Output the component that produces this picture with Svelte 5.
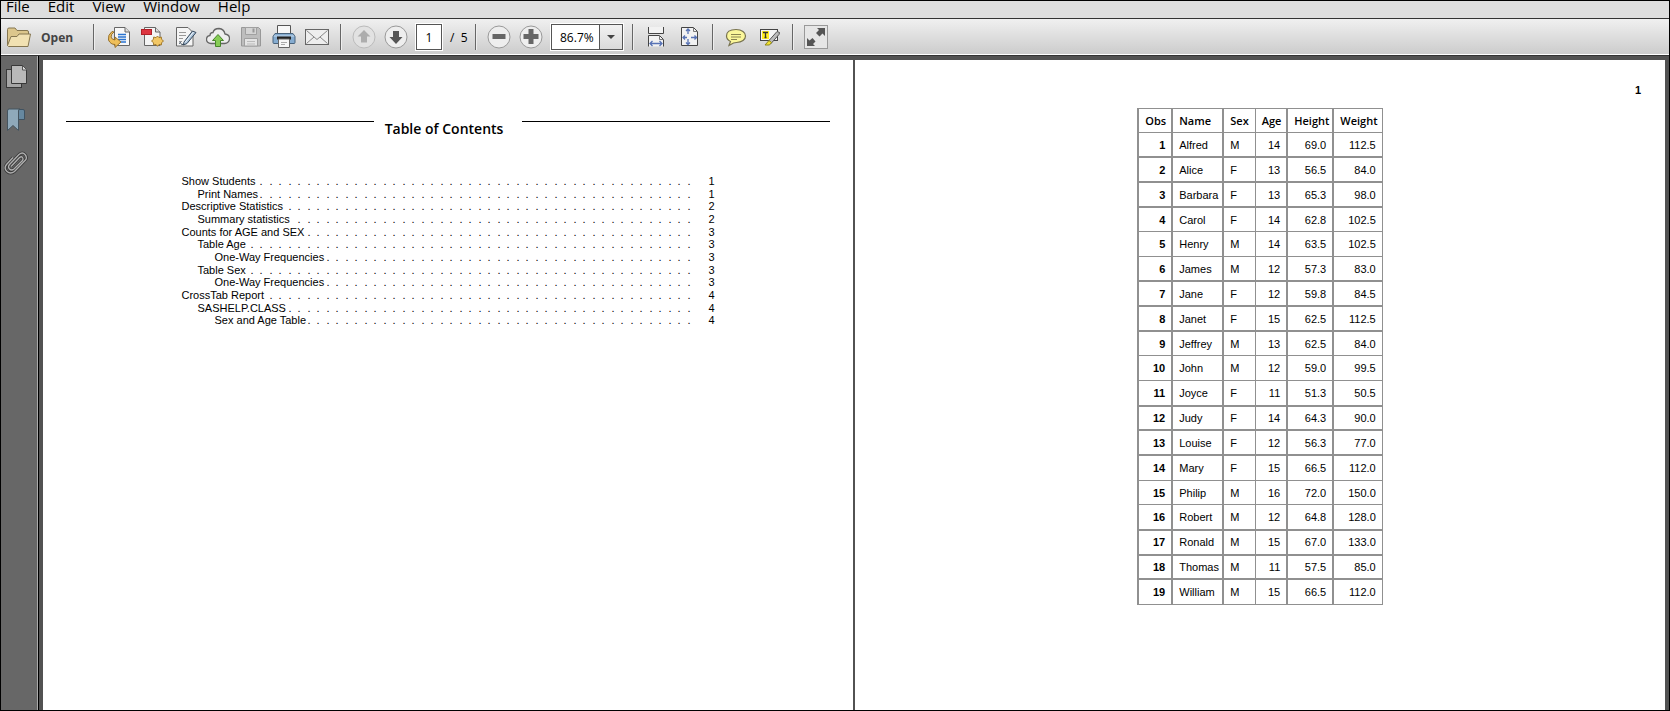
<script>
let page = '1'
let zoom = '86.7%'

const menus = ['File', 'Edit', 'View', 'Window', 'Help']

// dots = how many leader dots fit after the title
const toc = [
  { title: 'Show Students', level: 0, dots: 46, page: 1 },
  { title: 'Print Names', level: 1, dots: 46, page: 1 },
  { title: 'Descriptive Statistics', level: 0, dots: 43, page: 2 },
  { title: 'Summary statistics', level: 1, dots: 42, page: 2 },
  { title: 'Counts for AGE and SEX', level: 0, dots: 41, page: 3 },
  { title: 'Table Age', level: 1, dots: 47, page: 3 },
  { title: 'One-Way Frequencies', level: 2, dots: 39, page: 3 },
  { title: 'Table Sex', level: 1, dots: 47, page: 3 },
  { title: 'One-Way Frequencies', level: 2, dots: 39, page: 3 },
  { title: 'CrossTab Report', level: 0, dots: 45, page: 4 },
  { title: 'SASHELP.CLASS', level: 1, dots: 43, page: 4 },
  { title: 'Sex and Age Table', level: 2, dots: 41, page: 4 }
]

const students = [
  ['Alfred', 'M', 14, 69.0, 112.5],
  ['Alice', 'F', 13, 56.5, 84.0],
  ['Barbara', 'F', 13, 65.3, 98.0],
  ['Carol', 'F', 14, 62.8, 102.5],
  ['Henry', 'M', 14, 63.5, 102.5],
  ['James', 'M', 12, 57.3, 83.0],
  ['Jane', 'F', 12, 59.8, 84.5],
  ['Janet', 'F', 15, 62.5, 112.5],
  ['Jeffrey', 'M', 13, 62.5, 84.0],
  ['John', 'M', 12, 59.0, 99.5],
  ['Joyce', 'F', 11, 51.3, 50.5],
  ['Judy', 'F', 14, 64.3, 90.0],
  ['Louise', 'F', 12, 56.3, 77.0],
  ['Mary', 'F', 15, 66.5, 112.0],
  ['Philip', 'M', 16, 72.0, 150.0],
  ['Robert', 'M', 12, 64.8, 128.0],
  ['Ronald', 'M', 15, 67.0, 133.0],
  ['Thomas', 'M', 11, 57.5, 85.0],
  ['William', 'M', 15, 66.5, 112.0]
]
</script>

<div class="app">
  <nav class="menubar">
    {#each menus as m}
      <button>{m}</button>
    {/each}
  </nav>

  <div class="toolbar">
    <button class="open">
      <svg width="26" height="24" viewBox="0 0 26 24">
        <path d="M1.5 20.5V4.5Q1.5 3 3 3h6l2 2.5h10q1.5 0 1.5 1.5v3" fill="#dcc68c" stroke="#857650" />
        <path d="M1.5 20.5L5 11.5h6l2-2.5h11.5L22 21.5H2.5z" fill="#f1e1b2" stroke="#857650" stroke-linejoin="round" />
      </svg>
      <span>Open</span>
    </button>
    <i class="sep"></i>

    <div class="group files">
      <button aria-label="Convert">
        <svg width="24" height="24" viewBox="0 0 24 24">
          <path d="M7.5 2.5H18l4.500 4.500v13.500h-15z" fill="#f8f8f8" stroke="#666" />
          <path d="M18 2.500V7h4.500" fill="#ddd" stroke="#666" />
          <path d="M11 9.500h8M11 12h8M11 14.500h8M13 17h6" stroke="#2a73d0" stroke-width="1.5" />
          <path d="M5 6.500Q.5 10 1.500 15q2 4.500 6.500 4.500v3l6-5.500-6-5v3Q4.500 14.500 4 12q0-3 3-5z" fill="#efbf5a" stroke="#96702c" />
        </svg>
      </button>
      <button aria-label="Create PDF">
        <svg width="24" height="24" viewBox="0 0 24 24">
          <path d="M4.500 2.500h11L20 7v13.500H4.500z" fill="#f4f4f4" stroke="#666" />
          <path d="M15.500 2.500V7H20" fill="#ddd" stroke="#666" />
          <rect x="1.5" y="4.5" width="10" height="5" fill="#dd3540" stroke="#b02028" />
          <path d="M17.500 11l1.500 1.700 2.300-.7.200 2.300 2 1.700-2 1.700-.2 2.300-2.300-.6-1.500 1.900-1.500-1.900-2.300.6-.2-2.300-2-1.700 2-1.700.2-2.300 2.300.7z" fill="#f2c765" stroke="#a37a2b" />
        </svg>
      </button>
      <button aria-label="Sign">
        <svg width="24" height="24" viewBox="0 0 24 24">
          <path d="M3.500 2.500H15l5 5v13.500H3.500z" fill="#f5f5f5" stroke="#666" />
          <path d="M6 7.500h7M6 10.500h7M6 13.500h4M6 16.500h3" stroke="#999" />
          <path d="M11 17L19.500 6l3.500 1.500L14 18.500l-3.500 1.500z" fill="#a9c2d9" stroke="#37495c" />
          <path d="M12 17.500L20.500 7" stroke="#eef5fb" />
          <path d="M6 18.500q2-2 2 0t3 .5" fill="none" stroke="#345" />
        </svg>
      </button>
      <button aria-label="Upload">
        <svg width="24" height="24" viewBox="0 0 24 24">
          <path d="M5 18.500Q.5 18 .5 14.500.5 11 4 10.500 4 7.500 7 7.500q1-4 6-4 5 .5 6 5.500 4.500.5 4.500 4.500 0 4.500-5 5z" fill="#eee" stroke="#666" stroke-width="1.3" />
          <path d="M12 9.500l5.500 6h-3v6h-5v-6h-3z" fill="#86cc55" stroke="#46852a" />
        </svg>
      </button>
      <button aria-label="Save" disabled>
        <svg width="24" height="24" viewBox="0 0 24 24">
          <path d="M2.500 2.500h17l2 2v16.500h-19z" fill="#bdbdbd" stroke="#989898" />
          <path d="M6.500 2.500h11v7h-11z" fill="#d4d4d4" stroke="#a0a0a0" />
          <path d="M13.500 3.500h2v4h-2z" fill="#999" />
          <path d="M5.500 13.500h13V21h-13z" fill="#e4e4e4" stroke="#a0a0a0" />
          <path d="M8 16.500h8M8 19h8" stroke="#bbb" />
        </svg>
      </button>
      <button aria-label="Print">
        <svg width="24" height="24" viewBox="0 0 24 24">
          <path d="M5.500 10V.5h13V10" fill="#f7f7f7" stroke="#555" />
          <path d="M3 8.500h18l2 3v6q0 1-1 1H2q-1 0-1-1v-6z" fill="#86acd0" stroke="#49637c" />
          <path d="M2 11h20" stroke="#c7dcef" />
          <path d="M5 13h14" stroke="#222" stroke-width="3" />
          <path d="M6.500 14h11v8.500h-11z" fill="#f7f7f7" stroke="#666" />
          <path d="M9 17.500h6M9 19.500h4" stroke="#aaa" />
        </svg>
      </button>
      <button aria-label="Email">
        <svg width="24" height="24" viewBox="0 0 24 24">
          <rect x=".5" y="4.5" width="23" height="15" fill="#eee" stroke="#666" />
          <path d="M1.500 5.500L12 14.500l10.500-9M1.500 18.500L9 12M22.500 18.500L15 12" fill="none" stroke="#888" />
        </svg>
      </button>
    </div>
    <i class="sep"></i>

    <div class="group">
      <button aria-label="Previous page" disabled>
        <svg width="24" height="24" viewBox="0 0 24 24">
          <circle cx="12" cy="12" r="11" fill="#e2e2e2" stroke="#bbb" />
          <path d="M12 5l6.500 6.500H15v6H9v-6H5.500z" fill="#adadad" />
        </svg>
      </button>
      <button aria-label="Next page">
        <svg width="24" height="24" viewBox="0 0 24 24">
          <circle cx="12" cy="12" r="11" fill="#eee" stroke="#999" />
          <path d="M9 6h6v6h3.500L12 19l-6.500-7H9z" fill="#555" />
        </svg>
      </button>
      <input class="pageno" aria-label="Page" bind:value={page} />
      <span class="total">/&nbsp; 5</span>
    </div>
    <i class="sep"></i>

    <div class="group">
      <button aria-label="Zoom out">
        <svg width="24" height="24" viewBox="0 0 24 24">
          <circle cx="12" cy="12" r="11" fill="#eee" stroke="#999" />
          <path d="M5.500 9h13v5h-13z" fill="#666" />
        </svg>
      </button>
      <button aria-label="Zoom in">
        <svg width="24" height="24" viewBox="0 0 24 24">
          <circle cx="12" cy="12" r="11" fill="#eee" stroke="#999" />
          <path d="M9.500 4h5v5h5v5h-5v5h-5v-5h-5V9h5z" fill="#666" />
        </svg>
      </button>
      <div class="zoom">
        <select aria-label="Zoom" bind:value={zoom}>
          <option>86.7%</option>
        </select>
        <svg width="22" height="24" viewBox="0 0 22 24">
          <path d="M7 10h8l-4 4z" fill="#444" />
        </svg>
      </div>
    </div>
    <i class="sep"></i>

    <div class="group wide">
      <button aria-label="Fit width">
        <svg width="24" height="24" viewBox="0 0 24 24">
          <path d="M4.500 2v6.500h15V2" fill="#f2f2f2" stroke="#444" />
          <path d="M4.500 21.500v-11h11l4 4v7" fill="#f2f2f2" stroke="#444" />
          <path d="M15.500 10.500v4h4" fill="none" stroke="#777" />
          <path d="M6 18.500h12M8.500 16L6 18.500 8.500 21M15.500 16l2.500 2.500-2.500 2.500" fill="none" stroke="#5873b5" stroke-width="1.3" />
        </svg>
      </button>
      <button aria-label="Fit page">
        <svg width="24" height="24" viewBox="0 0 24 24">
          <path d="M3.500 2.500h12l4 4v14h-16z" fill="#f2f2f2" stroke="#444" />
          <path d="M15.500 2.500v4h4" fill="none" stroke="#777" />
          <path d="M10 4v5M10 14v6M5 12.500h4M13 12.500h6M8 6l2-2 2 2M8 17.500l2 2 2-2M7 10.500l-2 2 2 2M16.500 10.500l2 2-2 2" fill="none" stroke="#5873b5" stroke-width="1.3" />
        </svg>
      </button>
    </div>
    <i class="sep"></i>

    <div class="group wide">
      <button aria-label="Comment">
        <svg width="24" height="24" viewBox="0 0 24 24">
          <path d="M12 4.500c6 0 9.500 3 9.500 6.500s-3.500 6.500-9 6.500l-3 .5L5 20.500l1.500-4Q2.500 14.500 2.500 11 2.500 4.500 12 4.500z" fill="#fbf79a" stroke="#77724f" stroke-width="1.2" />
          <path d="M7 9.500h10M7 12h10M7 14.500h6" stroke="#8a8550" />
        </svg>
      </button>
      <button aria-label="Highlight">
        <svg width="24" height="24" viewBox="0 0 24 24">
          <rect x="2.500" y="4.500" width="17" height="11" fill="#f5f5f5" stroke="#444" />
          <rect x="4" y="6" width="7" height="8" fill="#ffee22" />
          <path d="M5 7.500h5M7.500 7.500V13M6.500 12.500h2" stroke="#333" stroke-width="1.3" />
          <path d="M11 15.500l8-9 2.500 1-.5 2-8 9z" fill="#bbb" stroke="#555" />
          <path d="M11 15.500l2.500 2-2 2.500H7z" fill="#f2e22c" stroke="#8f861c" />
        </svg>
      </button>
    </div>
    <i class="sep"></i>

    <div class="group wide">
      <button aria-label="Read mode">
        <svg width="24" height="24" viewBox="0 0 24 24">
          <rect x=".5" y=".5" width="23" height="23" fill="#e6e6e6" stroke="#999" />
          <path d="M13 3h8v8l-2.500-2.500-3 3-3.500-3.500 3-3zM3 13l2.500 2.500 3-2.500 3 3.500-2.500 2.500L11 21H3z" fill="#555" />
        </svg>
      </button>
    </div>
  </div>

  <div class="main">
    <aside>
      <button aria-label="Pages">
        <svg width="24" height="24" viewBox="0 0 24 24">
          <rect x="2.500" y="4.500" width="15" height="18" fill="#a5a5a5" stroke="#383838" />
          <path d="M7.500.5h11l4 4v14h-15z" fill="#b9b9b9" stroke="#383838" />
          <path d="M18.500 1v4h4" fill="#ddd" stroke="#555" />
        </svg>
      </button>
      <button aria-label="Bookmarks">
        <svg width="24" height="24" viewBox="0 0 24 24">
          <path d="M13 1.500h6q1.500 0 1.500 1.500v8.500h-6z" fill="#6688a0" stroke="#3f5261" />
          <path d="M3.500 22.500V3Q3.500 1 5 1h11q-1.500 0-1.500 2v19.500L9 17.500z" fill="#8fa9ba" stroke="#44545f" />
        </svg>
      </button>
      <button aria-label="Attachments">
        <svg width="24" height="24" viewBox="0 0 24 24">
          <path d="M7 15.500l8.500-9q2-1.500 3 0t0 3L10 18q-2.500 2-4.500 0t0-4.500L15 3.500q3.500-3 6 0t.5 5.500L10.500 20.500q-4 3-7.500 0t-.5-7L9 6.500" fill="none" stroke="#3a3a3a" stroke-width="3" />
          <path d="M7 15.500l8.500-9q2-1.500 3 0t0 3L10 18q-2.500 2-4.500 0t0-4.500L15 3.500q3.500-3 6 0t.5 5.500L10.500 20.500q-4 3-7.500 0t-.5-7L9 6.500" fill="none" stroke="#b0b0b0" stroke-width="1.3" />
        </svg>
      </button>
    </aside>

    <div class="pages">
      <section class="page contents">
        <header>
          <hr />
          <h1>Table of Contents</h1>
          <hr />
        </header>
        <ol>
          {#each toc as t}
            <li class="level{t.level}">
              <span>{t.title}</span>
              <span class="leader" aria-hidden="true">
                {#each Array(t.dots) as _}<span>.</span>{/each}
              </span>
              <span class="num">{t.page}</span>
            </li>
          {/each}
        </ol>
      </section>

      <section class="page listing">
        <div class="folio">1</div>
        <table>
          <colgroup>
            <col class="c-obs" />
            <col class="c-name" />
            <col class="c-sex" />
            <col class="c-sex" />
            <col class="c-height" />
            <col class="c-weight" />
          </colgroup>
          <thead>
            <tr>
              <th>Obs</th>
              <th class="left">Name</th>
              <th class="left">Sex</th>
              <th>Age</th>
              <th>Height</th>
              <th>Weight</th>
            </tr>
          </thead>
          <tbody>
            {#each students as s, i}
              <tr>
                <th>{i + 1}</th>
                <td class="left">{s[0]}</td>
                <td class="left">{s[1]}</td>
                <td>{s[2]}</td>
                <td>{s[3].toFixed(1)}</td>
                <td>{s[4].toFixed(1)}</td>
              </tr>
            {/each}
          </tbody>
        </table>
      </section>
    </div>
  </div>
</div>

<style>
:global(body) {
  margin: 0;
}
.app {
  box-sizing: border-box;
  min-height: 100vh;
  display: flex;
  flex-direction: column;
  border: 1px solid #000;
  font-family: "Open Sans", "Noto Sans", sans-serif;
  color: #000;
}
button {
  display: flex;
  align-items: center;
  margin: 0;
  padding: 0;
  border: 0;
  background: none;
  font: inherit;
  color: inherit;
}
svg {
  display: block;
}

.menubar {
  display: flex;
  align-items: flex-start;
  gap: 18px;
  height: 17px;
  padding-left: 5px;
  background: #dedede;
  border-bottom: 1px solid #333;
  font-size: 15px;
  line-height: 10px;
}

.toolbar {
  display: flex;
  align-items: center;
  height: 36px;
  padding-left: 5px;
  background: linear-gradient(#f0f0f0, #cbcbcb);
  border-bottom: 1px solid #333;
  box-shadow: inset 0 -1px #fff;
  font-size: 12px;
}
.open {
  width: 87px;
  gap: 9px;
  color: #444;
  font-weight: 700;
}
.sep {
  width: 1px;
  height: 26px;
  background: #666;
  border-right: 1px solid #eee;
}
.group {
  display: flex;
  align-items: center;
  gap: 8px;
  padding: 0 9px 0 10px;
}
.files {
  gap: 9px;
  padding: 0 11px 0 12px;
}
.wide {
  gap: 10px;
  padding: 0 10px;
}
.pageno {
  box-sizing: border-box;
  width: 26px;
  height: 26px;
  padding: 0;
  border: 1px solid #555;
  box-shadow: 0 0 0 1px #fff;
  background: #fff;
  font: inherit;
  text-align: center;
}
.total {
  width: 16px;
  white-space: nowrap;
}
.zoom {
  display: grid;
  width: 72px;
  box-shadow: 0 0 0 1px #fff;
}
.zoom select {
  grid-area: 1 / 1;
  box-sizing: border-box;
  height: 26px;
  width: 72px;
  padding: 0 0 0 8px;
  appearance: none;
  border: 1px solid #555;
  border-radius: 0;
  background: #fff;
  font: inherit;
  color: #000;
}
.zoom svg {
  grid-area: 1 / 1;
  place-self: center end;
  margin-right: 1px;
  background: linear-gradient(#f2f2f2, #dadada);
  border-left: 1px solid #555;
  pointer-events: none;
}

.main {
  flex: 1;
  display: flex;
}
aside {
  box-sizing: border-box;
  width: 38px;
  display: flex;
  flex-direction: column;
  gap: 19px;
  padding: 9px 0 0 3px;
  background: #676767;
  border-right: 1px solid #000;
  box-shadow: inset -1px 0 #aaa;
}
.pages {
  flex: 1;
  display: grid;
  grid-template-columns: 1fr 1fr;
  gap: 2px;
  padding: 4px 4px 0;
  background: #525252;
}
.page {
  background: #fff;
  font-family: "Liberation Sans", Arial, sans-serif;
  font-size: 11px;
}

.contents header {
  display: flex;
  align-items: flex-start;
  padding: 61px 23px 0;
}
hr {
  flex: 1;
  margin: 0;
  border: 0;
  border-top: 1px solid #000;
}
h1 {
  margin: 0;
  padding: 0 19px 0 11px;
  font-family: "Open Sans", "Noto Sans", sans-serif;
  font-size: 14px;
  font-weight: 600;
  line-height: 16px;
}
ol {
  display: grid;
  grid-template-columns: 100%;
  grid-auto-rows: 1fr;
  width: 533px;
  height: 152px;
  margin: 38px auto 0;
  padding: 0;
  list-style: none;
  line-height: 12px;
}
li {
  display: flex;
  white-space: nowrap;
}
.level1 {
  padding-left: 16px;
}
.level2 {
  padding-left: 33px;
}
.leader {
  flex: 1;
  display: flex;
  justify-content: flex-end;
  min-width: 0;
}
.leader span {
  flex: none;
  width: 9px;
  text-align: right;
}
.leader span:nth-last-child(odd) {
  width: 10px;
}
.num {
  flex: none;
  width: 24px;
  text-align: right;
}

.listing {
  display: flex;
  flex-direction: column;
}
.folio {
  height: 28px;
  padding: 20px 24px 0 0;
  font-weight: 700;
  line-height: 20px;
  text-align: right;
}
table {
  table-layout: fixed;
  width: 244px;
  height: 497px;
  margin: 0 auto;
  border-collapse: collapse;
}
tr {
  height: 24px;
}
.c-obs {
  width: 34px;
}
.c-name {
  width: 51px;
}
.c-sex {
  width: 32px;
}
.c-height {
  width: 46px;
}
.c-weight {
  width: 49px;
}
th,
td {
  padding: 0 6px;
  border: 1px solid #909090;
  line-height: 12px;
  text-align: right;
}
th:first-child,
td:nth-child(2),
th:nth-child(2),
td:nth-child(3),
th:nth-child(3),
td:nth-child(5),
th:nth-child(5),
td:nth-child(6),
th:nth-child(6) {
  border-left-width: 2px;
}
tbody tr:nth-child(5n + 2) > *,
tbody tr:nth-child(5n + 3) > *,
tbody tr:nth-child(5n + 4) > * {
  border-top-width: 2px;
}
thead th {
  font-family: "Open Sans", "Noto Sans", sans-serif;
  font-weight: 600;
}
.left {
  text-align: left;
}
</style>
